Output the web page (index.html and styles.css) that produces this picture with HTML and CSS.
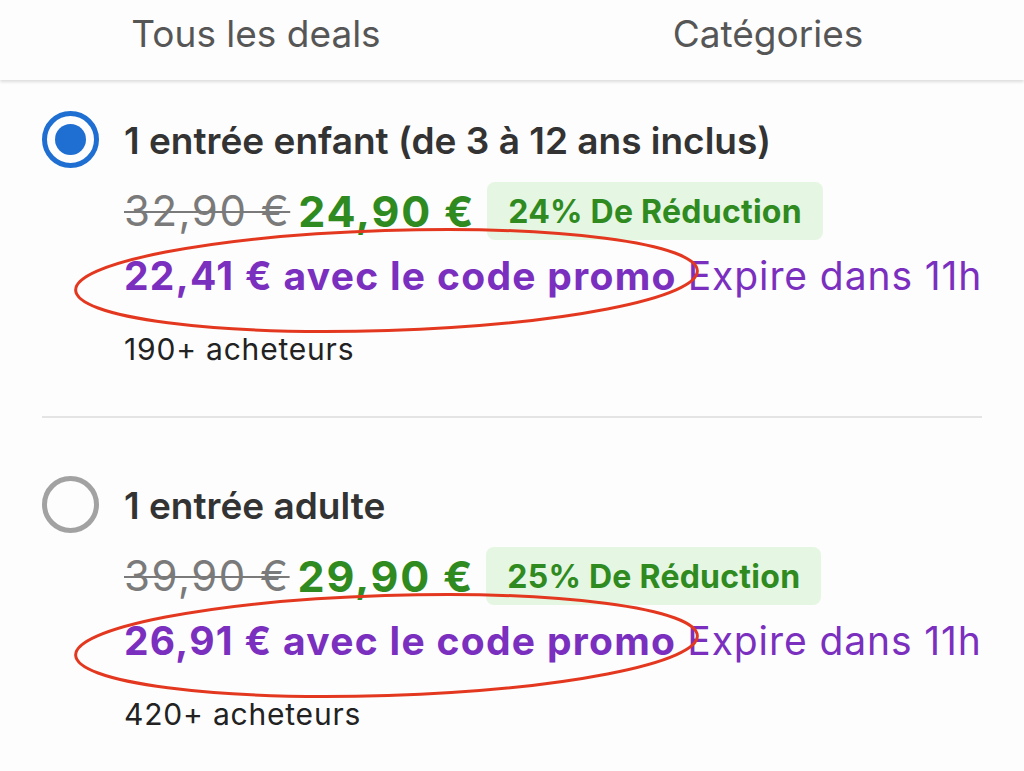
FILE: index.html
```html
<!DOCTYPE html>
<html lang="fr">
<head>
<meta charset="utf-8">
<title>Deals</title>
<link rel="stylesheet" href="styles.css">
</head>
<body>
<header class="tabs">
  <div class="tab">Tous les deals</div>
  <div class="tab">Catégories</div>
</header>
<main class="list">
  <section class="deal">
    <div class="deal-head">
      <span class="radio radio-on"></span>
      <div class="title">1 entrée enfant (de 3 à 12 ans inclus)</div>
    </div>
    <div class="deal-body">
      <div class="prices">
        <span class="old">32,90 €</span>
        <span class="new">24,90 €</span>
        <span class="badge">24% De Réduction</span>
      </div>
      <div class="promo">
        <span class="promo-main">22,41 € avec le code promo</span>
        <span class="expire">Expire dans 11h</span>
        <svg class="circle" viewBox="0 0 627 105" aria-hidden="true"><ellipse cx="313.5" cy="52.5" rx="311" ry="50" transform="rotate(-1.8 313.5 52.5)"/></svg>
      </div>
      <div class="buyers">190+ acheteurs</div>
    </div>
  </section>
  <section class="deal">
    <div class="deal-head">
      <span class="radio"></span>
      <div class="title">1 entrée adulte</div>
    </div>
    <div class="deal-body">
      <div class="prices">
        <span class="old">39,90 €</span>
        <span class="new">29,90 €</span>
        <span class="badge">25% De Réduction</span>
      </div>
      <div class="promo">
        <span class="promo-main">26,91 € avec le code promo</span>
        <span class="expire">Expire dans 11h</span>
        <svg class="circle" viewBox="0 0 627 105" aria-hidden="true"><ellipse cx="313.5" cy="52.5" rx="311" ry="50" transform="rotate(-1.8 313.5 52.5)"/></svg>
      </div>
      <div class="buyers">420+ acheteurs</div>
    </div>
  </section>
</main>
</body>
</html>
```
FILE: styles.css
```css
* { box-sizing: border-box; }
html, body { margin: 0; padding: 0; }
body {
  background: #fdfdfd;
  font-family: Inter, "Liberation Sans", Arial, sans-serif;
  width: 1024px;
  height: 771px;
  overflow: hidden;
}
.tabs {
  display: grid;
  grid-template-columns: 1fr 1fr;
  height: 80px;
  background: #fdfdfd;
  box-shadow: 0 2px 3px rgba(0,0,0,0.13);
  position: relative;
  z-index: 1;
}
.tab {
  text-align: center;
  font-size: 37px;
  line-height: 44px;
  padding-top: 12px;
  color: #565656;
}
.list { display: flex; flex-direction: column; }
.deal {
  padding: 58px 0 47px;
  margin: 0 42px;
}
.deal:first-child { padding-top: 31px; }
.deal + .deal { border-top: 2px solid #e4e4e4; }
.deal-head {
  display: flex;
  align-items: center;
  gap: 25px;
}
.radio {
  width: 57px;
  height: 57px;
  border-radius: 50%;
  border: 5px solid #a2a2a2;
  flex: none;
  display: flex;
  align-items: center;
  justify-content: center;
}
.radio-on { border-color: #1f6fd2; }
.radio-on::after {
  content: "";
  width: 31px;
  height: 31px;
  border-radius: 50%;
  background: #1f6fd2;
}
.title {
  font-size: 37px;
  line-height: 44px;
  font-weight: 600;
  color: #333;
  padding-top: 2px;
}
.deal-body { padding-left: 82px; }
.prices {
  display: flex;
  align-items: center;
  height: 58px;
  margin-top: 14px;
  gap: 8px;
}
.old {
  font-size: 42px;
  letter-spacing: 1.5px;
  line-height: 50px;
  color: #7a7a7a;
  text-decoration: line-through;
  text-decoration-thickness: 2px;
}
.new {
  font-size: 43px;
  letter-spacing: 1.8px;
  line-height: 50px;
  font-weight: 700;
  color: #2f8a1f;
}
.badge {
  margin-left: 4px;
  height: 58px;
  display: flex;
  align-items: center;
  padding: 0 21px;
  background: #e5f7e2;
  border-radius: 8px;
  font-size: 32px;
  letter-spacing: 0.25px;
  font-weight: 700;
  color: #2f8a1f;
}
.promo {
  position: relative;
  margin-top: 12px;
  font-size: 39px;
  line-height: 48px;
  color: #7b2fbf;
  white-space: nowrap;
}
.promo-main { font-weight: 700; letter-spacing: 1.3px; }
.expire { letter-spacing: 0.9px; }
.circle {
  position: absolute;
  left: -51px;
  top: -24px;
  width: 627px;
  height: 105px;
  overflow: visible;
}
.circle ellipse {
  fill: none;
  stroke: #e3381f;
  stroke-width: 3;
}
.buyers {
  margin-top: 29px;
  font-size: 30px;
  letter-spacing: 0.8px;
  line-height: 40px;
  color: #222;
}
```
